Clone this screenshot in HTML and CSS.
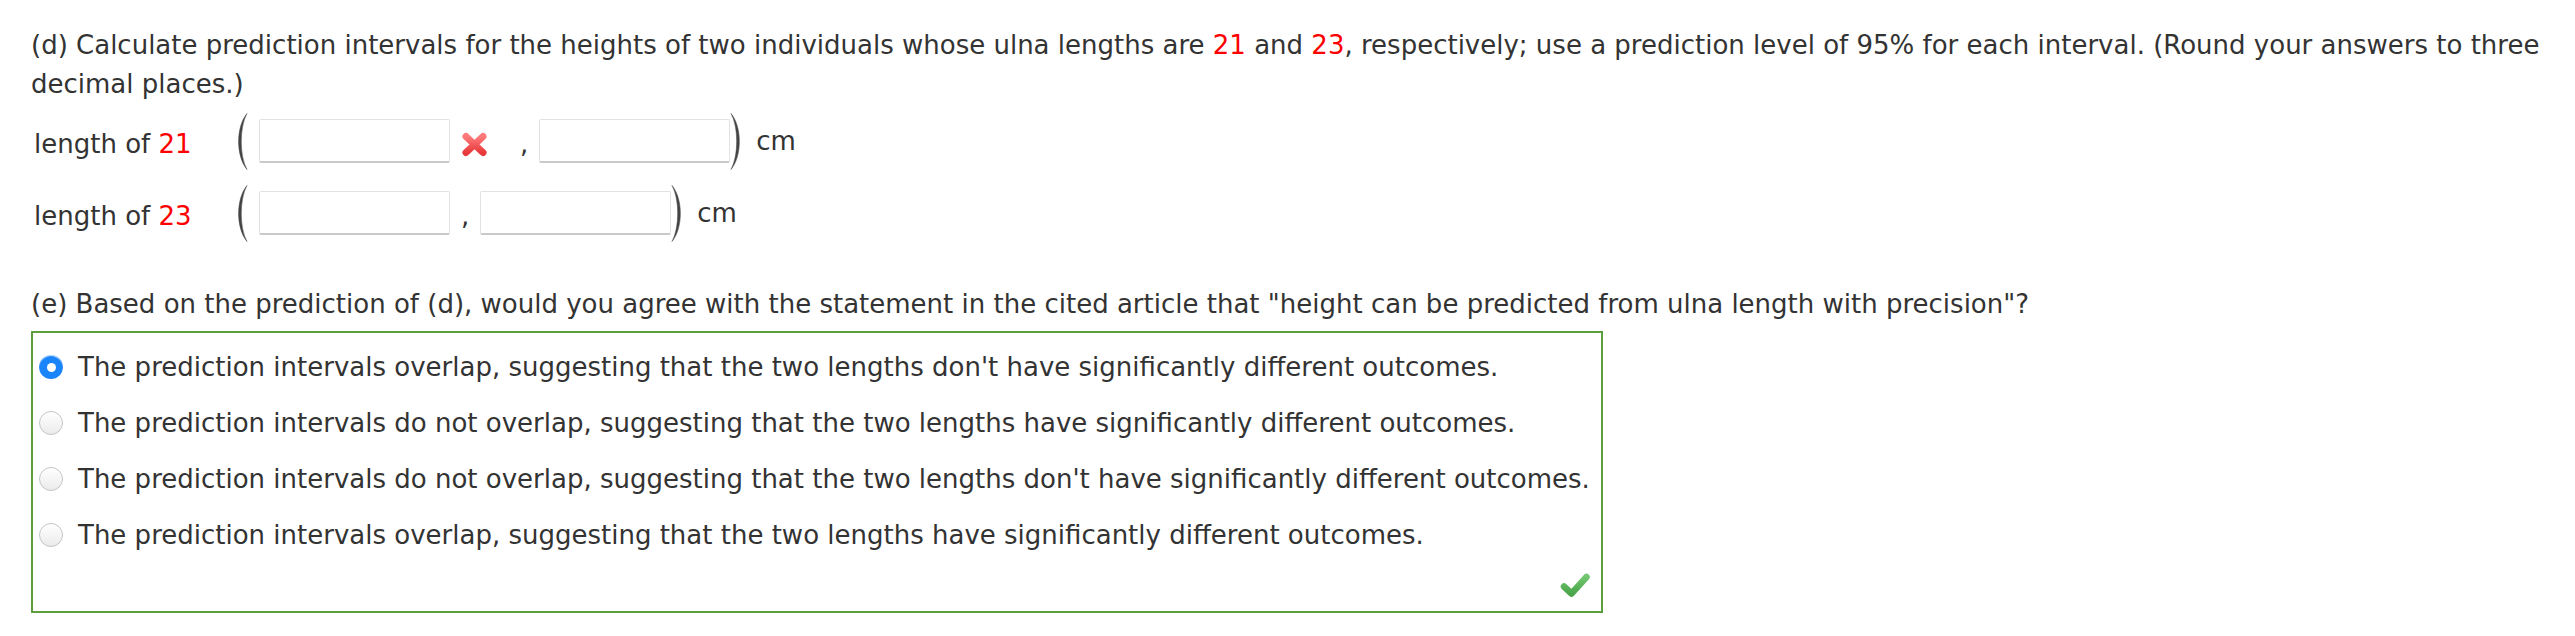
FILE: index.html
```html
<!DOCTYPE html>
<html>
<head>
<meta charset="utf-8">
<link rel="stylesheet" href="styles.css">
</head>
<body>
<div class="page">
  <p class="question">(d) Calculate prediction intervals for the heights of two individuals whose ulna lengths are <span class="num">21</span> and <span class="num">23</span>, respectively; use a prediction level of 95% for each interval. (Round your answers to three decimal places.)</p>

  <div class="intervals">
    <div class="irow">
      <span class="label">length of <span class="num">21</span></span>
      <svg class="paren" viewBox="0 0 13 57"><path d="M12 0.5 C0.8 14 0.8 43 12 56.5 C4.4 43 4.4 14 12 0.5Z"/></svg>
      <span class="field first"></span>
      <svg class="xmark" viewBox="0 0 27 25">
        <defs><linearGradient id="xg" x1="0" y1="0" x2="0" y2="1"><stop offset="0" stop-color="#ff7b7b"/><stop offset="1" stop-color="#e8393c"/></linearGradient></defs>
        <path d="M5 4.5 L22 20.5 M22 4.5 L5 20.5" stroke="url(#xg)" stroke-width="7" stroke-linecap="round" fill="none"/>
      </svg>
      <span class="comma wide">,</span>
      <span class="field"></span>
      <svg class="paren" viewBox="0 0 13 57"><path d="M1 0.5 C12.2 14 12.2 43 1 56.5 C8.6 43 8.6 14 1 0.5Z"/></svg>
      <span class="unit">cm</span>
    </div>
    <div class="irow">
      <span class="label">length of <span class="num">23</span></span>
      <svg class="paren" viewBox="0 0 13 57"><path d="M12 0.5 C0.8 14 0.8 43 12 56.5 C4.4 43 4.4 14 12 0.5Z"/></svg>
      <span class="field first"></span>
      <span class="comma">,</span>
      <span class="field"></span>
      <svg class="paren" viewBox="0 0 13 57"><path d="M1 0.5 C12.2 14 12.2 43 1 56.5 C8.6 43 8.6 14 1 0.5Z"/></svg>
      <span class="unit">cm</span>
    </div>
  </div>

  <p class="question second">(e) Based on the prediction of (d), would you agree with the statement in the cited article that "height can be predicted from ulna length with precision"?</p>

  <div class="answers">
    <div class="choice"><span class="radio checked"></span><span class="ctext">The prediction intervals overlap, suggesting that the two lengths don't have significantly different outcomes.</span></div>
    <div class="choice"><span class="radio"></span><span class="ctext">The prediction intervals do not overlap, suggesting that the two lengths have significantly different outcomes.</span></div>
    <div class="choice"><span class="radio"></span><span class="ctext">The prediction intervals do not overlap, suggesting that the two lengths don't have significantly different outcomes.</span></div>
    <div class="choice"><span class="radio"></span><span class="ctext">The prediction intervals overlap, suggesting that the two lengths have significantly different outcomes.</span></div>
    <div class="status">
      <svg class="check" viewBox="0 0 30 24">
        <defs><linearGradient id="cg" x1="0" y1="0" x2="0" y2="1"><stop offset="0" stop-color="#72c66f"/><stop offset="1" stop-color="#4aa54a"/></linearGradient></defs>
        <path d="M4 13.5 L11.5 20.5 L26.5 4" stroke="url(#cg)" stroke-width="6.5" stroke-linecap="round" stroke-linejoin="round" fill="none"/>
      </svg>
    </div>
  </div>
</div>
</body>
</html>
```

FILE: styles.css
```css
html, body {
  margin: 0;
  padding: 0;
  background: #ffffff;
}

body {
  font-family: "DejaVu Sans", Verdana, sans-serif;
  font-size: 26px;
  line-height: 39px;
  color: #333333;
}

.page {
  padding: 26px 4px 0 31px;
}

.question {
  margin: 0;
}

.num {
  color: #ff0000;
}

.intervals {
  display: flex;
  flex-direction: column;
  gap: 14px;
  margin-top: 8px;
}

.irow {
  display: flex;
  align-items: center;
  height: 58px;
}

.label {
  width: 204px;
  padding-left: 3px;
  margin-top: 6px;
  box-sizing: border-box;
  flex: none;
}

.paren {
  width: 13px;
  height: 57px;
  flex: none;
}

.paren path {
  fill: #444444;
  stroke: #444444;
  stroke-width: 0.5;
}

.field {
  width: 191px;
  height: 44px;
  box-sizing: border-box;
  border: 1px solid #e2e2e2;
  border-bottom: 2px solid #c9c9c9;
  border-radius: 2px;
  background: #ffffff;
  flex: none;
}

.field.first {
  margin-left: 11px;
}

.xmark {
  width: 27px;
  height: 25px;
  margin-left: 11px;
  margin-top: 6px;
  flex: none;
}

.comma {
  margin: 6px 11px 0 11px;
}

.comma.wide {
  margin-left: 32px;
}

.unit {
  margin-left: 13px;
  line-height: 30px;
}

.second {
  margin-top: 43px;
}

.answers {
  margin-top: 7px;
  width: 1572px;
  box-sizing: border-box;
  border: 2px solid #5c9e3b;
  padding: 6px 11px 0 4px;
}

.choice {
  display: flex;
  align-items: center;
  height: 56px;
}

.radio {
  width: 24px;
  height: 24px;
  box-sizing: border-box;
  border-radius: 50%;
  border: 1px solid #c4c4c4;
  background: linear-gradient(#ffffff, #ebebeb);
  box-shadow: inset 0 1px 1px rgba(255,255,255,0.8);
  margin-left: 2px;
  margin-right: 15px;
  flex: none;
  position: relative;
}

.radio.checked {
  border: none;
  background: #1a84fb;
}

.radio.checked::after {
  content: "";
  position: absolute;
  left: 7.5px;
  top: 7.5px;
  width: 9px;
  height: 9px;
  border-radius: 50%;
  background: #ffffff;
}

.status {
  display: flex;
  justify-content: flex-end;
  height: 48px;
  padding-top: 10px;
  box-sizing: border-box;
}

.check {
  width: 30px;
  height: 24px;
}
```
